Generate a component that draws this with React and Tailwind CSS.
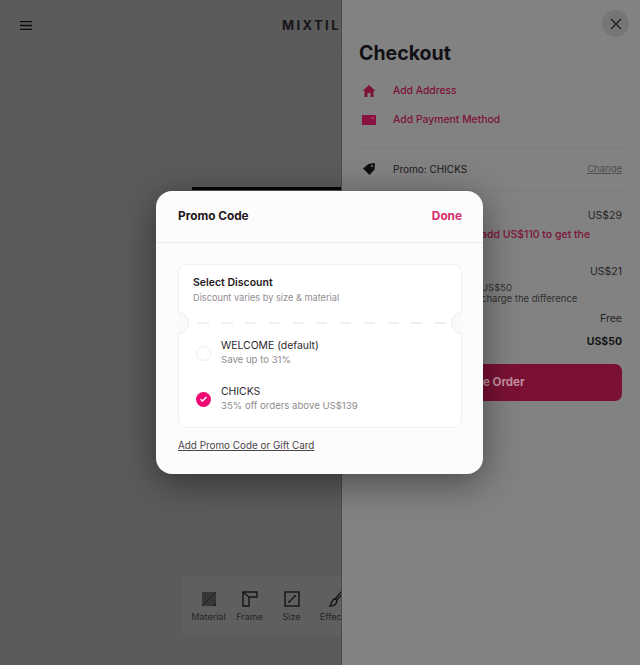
import React from "react";

const font = { fontFamily: '"Inter", "Liberation Sans", sans-serif' };

function Tool({ label, children }) {
  return (
    <div className="flex w-[41px] shrink-0 flex-col items-center">
      <svg width="18" height="18" viewBox="0 0 18 18" fill="none" stroke="#161616" strokeWidth="1.4">
        {children}
      </svg>
      <span className="mt-[3px] whitespace-nowrap text-[9px] leading-[12px] text-[#262626]">{label}</span>
    </div>
  );
}

function Row({ icon, children, className = "" }) {
  return (
    <div className={`flex items-center ${className}`}>
      <div className="flex w-[34px] shrink-0 pl-[3px]">{icon}</div>
      {children}
    </div>
  );
}

const dashes = [0, 1, 2, 3, 4, 5, 6, 7, 8, 9, 10];

export default function App() {
  return (
    <div className="relative flex h-[665px] w-[640px] overflow-hidden bg-[#5b5b5b]" style={font}>
      {/* Page behind the drawer */}
      <div className="flex w-[341px] shrink-0 flex-col overflow-hidden">
        <header className="flex h-[52px] items-center border-b border-[#585858] pl-[20px] pr-0">
          <svg width="12" height="9" viewBox="0 0 12 9" stroke="#0d0d0d" strokeWidth="1.3">
            <path d="M0 .7h12M0 4.500h12M0 8.300h12" />
          </svg>
          <span className="ml-[250px] whitespace-nowrap text-[13px] font-bold tracking-[2.400px] text-[#17141a]">MIXTIL</span>
        </header>
        <div className="ml-[192px] mt-[135px] h-[3px] bg-[#050505]" />
        <div className="flex-1" />
        <div className="mb-[29px] ml-[182px] flex h-[60px] items-center overflow-hidden bg-[#5f5f5f] pl-[6px]">
          <Tool label="Material">
            <path d="M2 2h14v14H2z" stroke="none" fill="#161616" opacity=".8" />
            <path d="M1 5 5 1M1 10 10 1M1 15 15 1M5 17 17 5M10 17 17 10M1 7.500 7.500 1M1 12.500 12.500 1M2.500 17 17 2.500M7.500 17 17 7.500" stroke="#5f5f5f" strokeWidth=".7" />
          </Tool>
          <Tool label="Frame">
            <path d="M2 2h14v5H8v9H2z" />
            <path d="M2 2l6 5" />
          </Tool>
          <div className="ml-px">
            <Tool label="Size">
              <rect x="2" y="2" width="14" height="14" />
              <path d="M6 12l6-6" />
              <circle cx="6" cy="12" r="1" fill="#161616" stroke="none" />
              <circle cx="12" cy="6" r="1" fill="#161616" stroke="none" />
            </Tool>
          </div>
          <div className="ml-[2px]">
            <Tool label="Effects">
              <path d="M9 9 15 2l1.500 1.500L11 10z" />
              <path d="M9 9c-3 0-3 3-5 7 4 0 7-2 7-6z" />
            </Tool>
          </div>
        </div>
      </div>

      {/* Checkout drawer */}
      <aside className="flex-1 border-l border-[#4c4c4c] bg-[#828282] pl-[17px] pr-[18px]">
        <div className="flex justify-end pt-[10px]">
          <div className="-mr-[7px] flex h-[27px] w-[27px] items-center justify-center rounded-full bg-[#767676]">
            <svg width="12" height="12" viewBox="0 0 12 12" stroke="#1c1c1c" strokeWidth="1.4">
              <path d="M1 1l10 10M11 1 1 11" />
            </svg>
          </div>
        </div>
        <h1 className="mt-[2px] text-[19.500px] font-bold leading-[28px] text-[#111014]">Checkout</h1>
        <Row
          className="mt-[14px] h-[20px]"
          icon={
            <svg width="14" height="14" viewBox="0 0 14 14" fill="#7d1239">
              <path d="M7 1 0.5 7H2.500V13h3V9h3v4h3V7h2z" />
            </svg>
          }
        >
          <span className="text-[10.300px] font-medium text-[#7d1239]">Add Address</span>
        </Row>
        <Row
          className="mt-[9px] h-[20px]"
          icon={
            <svg width="14" height="10" viewBox="0 0 14 10" fill="#8a1240">
              <path d="M0 0h14v10H0z" />
              <path d="M9 2.500h3v1H9z" fill="#c8506f" />
            </svg>
          }
        >
          <span className="text-[10.400px] font-medium text-[#7d1239]">Add Payment Method</span>
        </Row>
        <div className="mt-[17px] border-t border-[#7a7a7a]" />
        <Row
          className="h-[42px]"
          icon={
            <svg width="14" height="14" viewBox="0 0 14 14" fill="#0f0f0f">
              <path d="M1 6.500 6.500 2 13 1 12.500 7.500 7.500 13z" />
              <circle cx="10" cy="4" r="1" fill="#828282" />
            </svg>
          }
        >
          <span className="text-[10px] text-[#19171a]">Promo: CHICKS</span>
          <span className="ml-auto text-[9.500px] text-[#4e4e4e] underline">Change</span>
        </Row>
        <div className="border-t border-[#7a7a7a]" />
        <div className="mt-[17px] text-right text-[10.500px] leading-[16px] text-[#252525]">US$29</div>
        <div className="mt-[4px] pl-[122px] text-[10.500px] font-medium leading-[14px] text-[#7d1239] whitespace-nowrap">
          add US$110 to get the
        </div>
        <div className="mt-[22px] text-right text-[10.500px] leading-[16px] text-[#252525]">US$21</div>
        <div className="mt-[2px] pl-[122px] text-[9.500px] leading-[11px] text-[#303030] whitespace-nowrap">
          US$50
          <br />
          charge the difference
        </div>
        <div className="mt-[7px] text-right text-[10.500px] leading-[16px] text-[#252525]">Free</div>
        <div className="mt-[7px] text-right text-[10.500px] font-bold leading-[16px] text-[#161616]">US$50</div>
        <div className="mt-[14px] flex h-[37px] items-center rounded-[7px] bg-[#7a1135] pl-[100px] text-[11.500px] font-bold text-[#c4929f]">
          Place Order
        </div>
      </aside>

      {/* Promo dialog */}
      <div className="absolute left-[156px] top-[191px] flex h-[283px] w-[327px] flex-col rounded-[16px] bg-[#fcfcfc] shadow-[0_8px_36px_rgba(0,0,0,0.45)]">
        <div className="flex h-[52px] items-center justify-between border-b border-[#ececec] pl-[22px] pr-[21px]">
          <span className="text-[11.800px] font-bold text-[#1f1620]">Promo Code</span>
          <span className="text-[11.800px] font-bold text-[#d4296f]">Done</span>
        </div>
        <div className="pl-[22px] pr-[21px] pt-[21px]">
          <div className="relative h-[164px] rounded-[8px] border border-[#f1f0f1] bg-white">
            <div className="px-[14px] pt-[11px]">
              <div className="text-[10.500px] font-semibold leading-[14px] text-[#1f1a20]">Select Discount</div>
              <div className="mt-[1px] text-[9.200px] leading-[14px] text-[#938c92]">Discount varies by size &amp; material</div>
            </div>
            <div className="absolute -left-[1px] top-[47px] h-[22px] w-[11px] rounded-r-full border border-l-0 border-[#eeeeee] bg-[#fafafa]" />
            <div className="absolute -right-[1px] top-[47px] h-[22px] w-[11px] rounded-l-full border border-r-0 border-[#eeeeee] bg-[#fafafa]" />
            <div className="mt-[17px] flex h-[2px] gap-[12.700px] pl-[19px]">
              {dashes.map((d) => (
                <div key={d} className="h-[2px] w-[11px] shrink-0 bg-[#efefef]" />
              ))}
            </div>
            <div className="mt-[15px] flex items-center gap-[10px] pl-[17px]">
              <div className="h-[15px] w-[15px] rounded-full border border-[#ededed]" />
              <div>
                <div className="text-[10.400px] leading-[14px] text-[#2c2a2d]">WELCOME (default)</div>
                <div className="text-[9.600px] leading-[14px] text-[#8f8c8f]">Save up to 31%</div>
              </div>
            </div>
            <div className="mt-[18px] flex items-center gap-[10px] pl-[17px]">
              <div className="flex h-[15px] w-[15px] items-center justify-center rounded-full bg-[#f00b73]">
                <svg width="9" height="8" viewBox="0 0 9 8" fill="none" stroke="#fff" strokeWidth="1.500">
                  <path d="M1.500 4.200 3.500 6 7.500 2" />
                </svg>
              </div>
              <div>
                <div className="text-[10.400px] leading-[14px] text-[#2c2a2d]">CHICKS</div>
                <div className="text-[9.600px] leading-[14px] text-[#8f8c8f]">35% off orders above US$139</div>
              </div>
            </div>
          </div>
          <div className="mt-[10px] text-[9.900px] leading-[14px] text-[#4c444a] underline">Add Promo Code or Gift Card</div>
        </div>
      </div>
    </div>
  );
}
